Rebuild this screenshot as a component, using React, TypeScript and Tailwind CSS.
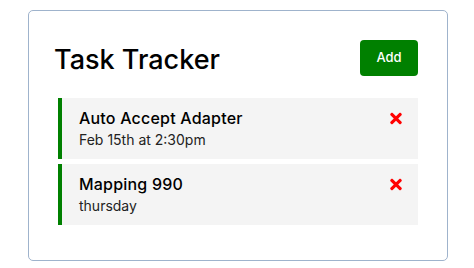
import React from 'react';
import { FaTimes } from 'react-icons/fa';

interface Task {
  id: number;
  text: string;
  day: string;
}

const tasks: Task[] = [
  { id: 1, text: 'Auto Accept Adapter', day: 'Feb 15th at 2:30pm' },
  { id: 2, text: 'Mapping 990', day: 'thursday' },
];

export default function App() {
  return (
    <div className="pt-[10px] pl-[28px] font-['Inter',sans-serif] text-black">
      <div className="w-[420px] h-[251px] border border-[#9fb3cc] rounded-[5px] px-[25px] pt-[25px]">
        {/* Header */}
        <div className="flex items-center justify-between h-[44px]">
          <h1 className="text-[27px] font-medium leading-none pt-[2px]">Task Tracker</h1>
          <button className="m-[4px] w-[58px] h-[36px] rounded-[4px] bg-[#008000] text-white text-[13px] font-medium">
            Add
          </button>
        </div>

        {/* Tasks */}
        <div className="mt-[18px] px-[4px] flex flex-col gap-[5px]">
          {tasks.map((task) => (
            <div
              key={task.id}
              className="bg-[#f4f4f4] border-l-[4px] border-[#008000] pl-[17px] pr-[16px] h-[61px] flex flex-col justify-center"
            >
              <div className="flex items-center justify-between">
                <h3 className="text-[16px] font-medium leading-[22px] tracking-[0.2px]">{task.text}</h3>
                <FaTimes className="text-[#ff0000] w-[12px] h-[17px]" />
              </div>
              <p className="text-[14px] leading-[21px] text-[#222]">{task.day}</p>
            </div>
          ))}
        </div>
      </div>
    </div>
  );
}
